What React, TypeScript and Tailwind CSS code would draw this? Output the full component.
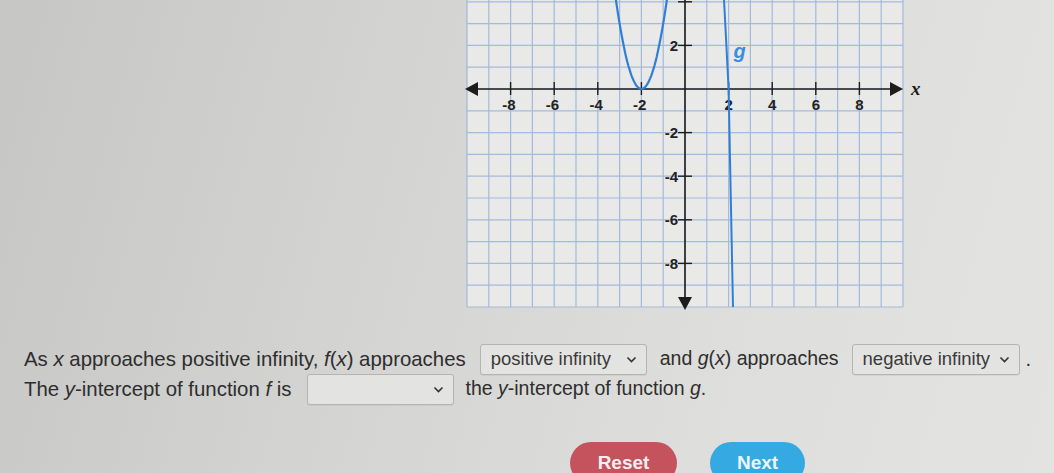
import React from 'react';

// graph geometry (svg px): origin of the axes and size of one unit
const OX = 230;
const OY = 89;
const U = 21.8;
const px = (x: number) => OX + x * U;
const py = (y: number) => OY - y * U;

const range = (a: number, b: number) => Array.from({ length: b - a + 1 }, (_, i) => a + i);

const fPath = () => {
  const pts: string[] = [];
  for (let x = -3.35; x <= -0.65; x += 0.05) {
    const y = 3 * (x + 2) * (x + 2);
    pts.push(`${px(x).toFixed(1)},${py(y).toFixed(1)}`);
  }
  return 'M' + pts.join(' L');
};

const gPts: [number, number][] = [
  [1.74, 6],
  [1.79, 4.1],
  [1.9, 2],
  [2.0, 0],
  [2.1, -5],
  [2.2, -10],
];

const LABEL_FONT = "'Liberation Sans', Arial, sans-serif";

const Graph: React.FC = () => (
  <svg width={470} height={318} viewBox="0 0 470 318" className="block">
    <rect x={px(-10)} y={py(10)} width={20 * U} height={20 * U} fill="#e9e9e7" />
    {range(-10, 10).map((i) => (
      <line key={'v' + i} x1={px(i)} y1={py(10)} x2={px(i)} y2={py(-10)} stroke="#a3badb" strokeWidth={1.2} />
    ))}
    {range(-10, 10).map((j) => (
      <line key={'h' + j} x1={px(-10)} y1={py(j)} x2={px(10)} y2={py(j)} stroke="#a3badb" strokeWidth={1.2} />
    ))}

    {/* axes */}
    <line x1={px(-10) + 6} y1={OY} x2={px(10) - 6} y2={OY} stroke="#1c1c1c" strokeWidth={1.6} />
    <polygon points={`${px(-10) - 2},${OY} ${px(-10) + 11},${OY - 7} ${px(-10) + 11},${OY + 7}`} fill="#1c1c1c" />
    <polygon points={`${px(10)},${OY} ${px(10) - 13},${OY - 7} ${px(10) - 13},${OY + 7}`} fill="#1c1c1c" />
    <line x1={OX} y1={py(10)} x2={OX} y2={py(-10) - 6} stroke="#1c1c1c" strokeWidth={1.6} />
    <polygon points={`${OX},${py(-10) + 3} ${OX - 7},${py(-10) - 10} ${OX + 7},${py(-10) - 10}`} fill="#1c1c1c" />

    {[-8, -6, -4, -2, 2, 4, 6, 8].map((t) => (
      <g key={'t' + t}>
        <line x1={px(t)} y1={OY - 7} x2={px(t)} y2={OY + 6} stroke="#1c1c1c" strokeWidth={1.4} />
        <text
          x={t < 0 ? px(t) + 5 : px(t)}
          y={OY + 21}
          textAnchor={t < 0 ? 'end' : 'middle'}
          fontSize={15}
          fontWeight={700}
          fill="#222"
          fontFamily={LABEL_FONT}
        >
          {t < 0 ? `-${-t}` : t}
        </text>
      </g>
    ))}
    <line x1={OX - 7} y1={py(4)} x2={OX + 7} y2={py(4)} stroke="#1c1c1c" strokeWidth={1.4} />
    {[-8, -6, -4, -2, 2].map((t) => (
      <g key={'y' + t}>
        <line x1={OX - 7} y1={py(t)} x2={OX + 7} y2={py(t)} stroke="#1c1c1c" strokeWidth={1.4} />
        <text
          x={OX - 7}
          y={py(t) + 5.5}
          textAnchor="end"
          fontSize={15}
          fontWeight={700}
          fill="#222"
          fontFamily={LABEL_FONT}
        >
          {t < 0 ? `-${-t}` : t}
        </text>
      </g>
    ))}

    {/* curves */}
    <path d={fPath()} fill="none" stroke="#2f7fd8" strokeWidth={2.2} />
    <polyline
      points={gPts.map(([x, y]) => `${px(x).toFixed(1)},${py(y).toFixed(1)}`).join(' ')}
      fill="none"
      stroke="#2f7fd8"
      strokeWidth={2}
    />
    <text
      x={px(2) + 5}
      y={py(1.4)}
      fontSize={20}
      fontWeight={700}
      fontStyle="italic"
      fill="#3a8de0"
      fontFamily={LABEL_FONT}
    >
      g
    </text>
    <text
      x={px(10) + 8}
      y={OY + 6}
      fontSize={19}
      fontWeight={700}
      fontStyle="italic"
      fill="#1c1c1c"
      fontFamily="'Liberation Serif', serif"
    >
      x
    </text>
  </svg>
);

const Chevron: React.FC = () => (
  <svg width="11" height="7" viewBox="0 0 11 7" className="shrink-0">
    <path d="M1.5 1.5 L5.5 5.5 L9.5 1.5" fill="none" stroke="#333" strokeWidth="1.6" />
  </svg>
);

const Select: React.FC<{ value?: string; className: string }> = ({ value, className }) => (
  <div
    className={`flex items-center justify-between h-[31px] pl-[10px] pr-[9px] border border-[#b4b4b2] rounded-[3px] bg-[#e3e3e1] shadow-[0_1px_0_rgba(0,0,0,0.05)] text-[18.5px] ${className}`}
  >
    <span className="text-[#3a3a3a]">{value}</span>
    <Chevron />
  </div>
);

export default function App() {
  return (
    <div
      className="w-[1054px] h-[473px] overflow-hidden bg-[linear-gradient(105deg,#c6c6c4_0%,#d3d3d1_35%,#dededc_70%,#e3e3e1_100%)] text-[20.4px] text-[#2e2e2e]"
      style={{ fontFamily: "'Liberation Sans', Arial, sans-serif" }}
    >
      <div className="ml-[455px]">
        <Graph />
      </div>

      <div className="mt-[26px] pl-[24px]">
        <div className="flex items-center h-[30px] whitespace-nowrap">
          <span>
            As <i>x</i> approaches positive infinity, <i>f</i>(<i>x</i>) approaches
          </span>
          <Select value="positive infinity" className="ml-[14px] w-[167px]" />
          <span className="ml-[13px] text-[19.5px]">
            and <i>g</i>(<i>x</i>) approaches
          </span>
          <Select value="negative infinity" className="ml-[13px] w-[168px]" />
          <span className="ml-[6px]">.</span>
        </div>
        <div className="flex items-center h-[30px] whitespace-nowrap">
          <span>
            The <i>y</i>-intercept of function <i>f</i> is
          </span>
          <Select className="ml-[15px] w-[147px]" />
          <span className="ml-[12px] text-[19.5px]">
            the <i>y</i>-intercept of function <i>g</i>.
          </span>
        </div>
      </div>

      <div className="flex mt-[38px] pl-[570px]">
        <button className="w-[107px] h-[42px] rounded-full bg-[#c4535e] text-[#f6eeee] font-bold text-[19px]">
          Reset
        </button>
        <button className="ml-[33px] w-[95px] h-[42px] rounded-full bg-[#35a9e2] text-[#eaf6fc] font-bold text-[19px]">
          Next
        </button>
      </div>
    </div>
  );
}
